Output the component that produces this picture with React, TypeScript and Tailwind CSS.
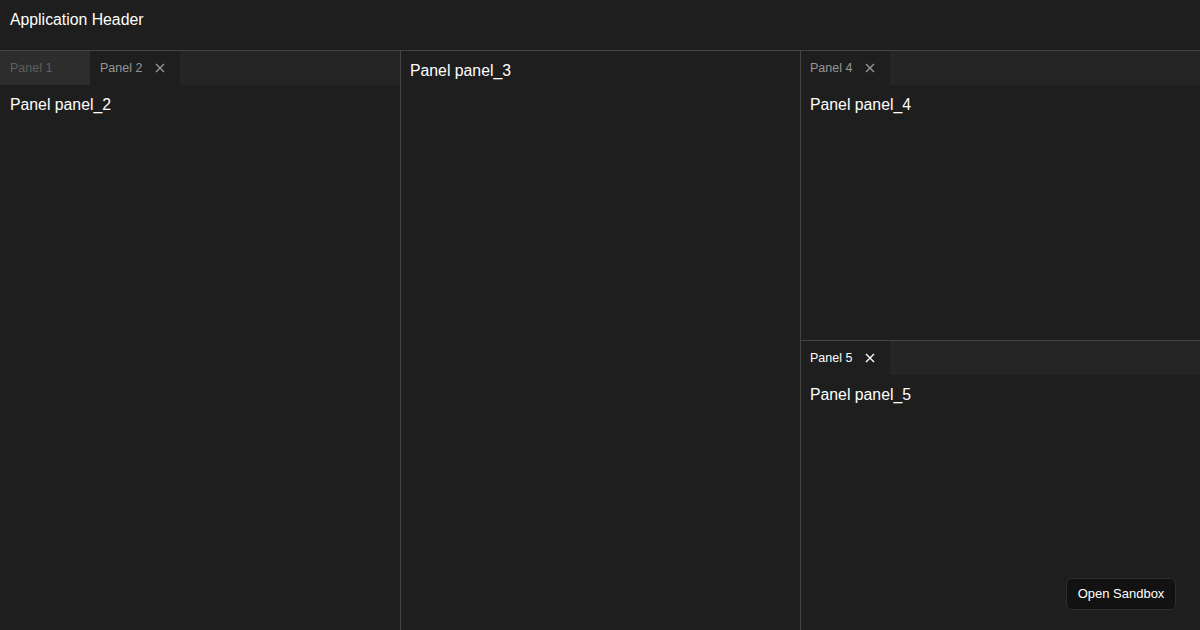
const font = { fontFamily: '"Liberation Sans", Arial, sans-serif' };

type Tab = { title: string; state: "inactive" | "active" | "focused" };

function CloseIcon() {
  return (
    <svg width="10" height="10" viewBox="0 0 10 10" fill="none">
      <path d="M1 1L9 9M9 1L1 9" stroke="currentColor" strokeWidth="1.4" />
    </svg>
  );
}

function TabBar({ tabs }: { tabs: Tab[] }) {
  return (
    <div className="flex h-[34px] shrink-0 bg-[#252526]">
      {tabs.map((t) => (
        <div
          key={t.title}
          className={
            "flex h-full w-[90px] items-center pl-[10px] pr-[12px] text-[12.5px] " +
            (t.state === "inactive"
              ? "bg-[#2d2d2d] text-[#5f5f5f]"
              : t.state === "active"
                ? "bg-[#1e1e1e] text-[#969696]"
                : "bg-[#1e1e1e] text-white")
          }
        >
          <span className="flex-1 truncate">{t.title}</span>
          <span
            className={
              "flex h-4 w-4 items-center justify-center " +
              (t.state === "inactive" ? "invisible" : "")
            }
          >
            <CloseIcon />
          </span>
        </div>
      ))}
    </div>
  );
}

function Pane({ id, tabs }: { id: string; tabs?: Tab[] }) {
  return (
    <div className="flex min-h-0 flex-1 flex-col">
      {tabs && <TabBar tabs={tabs} />}
      <div className="flex-1 p-[10px] text-[15.8px] leading-[20px] text-white">
        Panel {id}
      </div>
    </div>
  );
}

// sash lines sit over the panes, like the dock layout's dividers
const vSash =
  "relative before:absolute before:inset-y-0 before:left-0 before:z-10 before:w-px before:bg-[#444]";

export default function App() {
  return (
    <div
      className="relative flex h-[630px] w-[1200px] flex-col overflow-hidden bg-[#1e1e1e]"
      style={font}
    >
      <header className="h-[51px] shrink-0 border-b border-[#444] px-[10px] py-[10px] text-[15.8px] leading-[20px] text-white">
        Application Header
      </header>

      <div className="grid min-h-0 flex-1 grid-cols-3">
        <div className="flex flex-col">
          <Pane
            id="panel_2"
            tabs={[
              { title: "Panel 1", state: "inactive" },
              { title: "Panel 2", state: "active" },
            ]}
          />
        </div>
        <div className={"flex flex-col " + vSash}>
          <Pane id="panel_3" />
        </div>
        <div className={"flex flex-col " + vSash}>
          <div className="flex h-[289px] shrink-0 flex-col">
            <Pane id="panel_4" tabs={[{ title: "Panel 4", state: "active" }]} />
          </div>
          <div className="flex flex-1 flex-col border-t border-[#444]">
            <Pane id="panel_5" tabs={[{ title: "Panel 5", state: "focused" }]} />
          </div>
        </div>
      </div>

      <button className="absolute bottom-[20px] right-[24px] h-[32px] w-[110px] rounded-md border border-[#2e2e2e] bg-[#121212] text-[13px] text-white">
        Open Sandbox
      </button>
    </div>
  );
}
